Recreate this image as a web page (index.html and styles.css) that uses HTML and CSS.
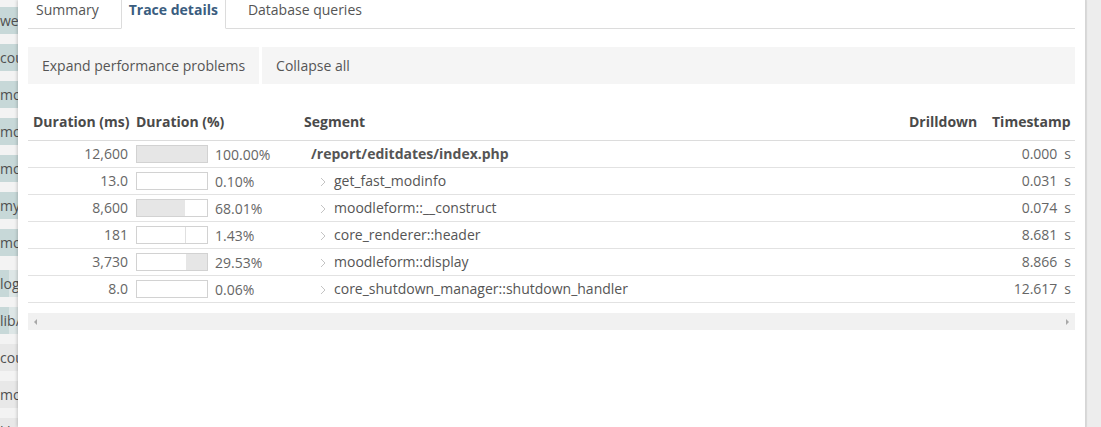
FILE: index.html
```html
<!DOCTYPE html>
<html>
<head>
<meta charset="utf-8">
<link rel="stylesheet" href="styles.css">
</head>
<body>
<div class="bgstrip">
  <div class="bgitem">web</div>
  <div class="bgitem">course</div>
  <div class="bgitem">mod</div>
  <div class="bgitem">mod</div>
  <div class="bgitem">mod</div>
  <div class="bgitem">my</div>
  <div class="bgitem">mod</div>
  <div class="bgitem part first">log</div>
  <div class="bgitem part">lib/</div>
  <div class="bgitem grey">course</div>
  <div class="bgitem grey">mod</div>
  <div class="bgitem grey">lib</div>
</div>
<div class="modal">
  <ul class="tabs">
    <li class="tab">Summary</li>
    <li class="tab active">Trace details</li>
    <li class="tab">Database queries</li>
  </ul>
  <div class="toolbar">
    <span class="btn sep">Expand performance problems</span>
    <span class="btn">Collapse all</span>
  </div>
  <table class="trace">
    <colgroup>
      <col class="c1"><col class="c2"><col class="c3"><col class="c4"><col class="c5">
    </colgroup>
    <thead>
      <tr><th>Duration (ms)</th><th>Duration (%)</th><th>Segment</th><th>Drilldown</th><th class="ts">Timestamp</th></tr>
    </thead>
    <tbody>
      <tr>
        <td class="num">12,600</td>
        <td><span class="bar"><span class="fill" style="left:0;width:100%"></span></span><span class="pct">100.00%</span></td>
        <td><span class="root">/report/editdates/index.php</span></td>
        <td></td>
        <td class="num">0.000<span class="unit">s</span></td>
      </tr>
      <tr>
        <td class="num">13.0</td>
        <td><span class="bar"><span class="fill" style="left:0;width:0.1%"></span></span><span class="pct">0.10%</span></td>
        <td><span class="child"><svg class="chev" width="6" height="10" viewBox="0 0 6 10"><polyline points="1,1 5,5 1,9" fill="none" stroke="#c4c4c4" stroke-width="1"/></svg>get_fast_modinfo</span></td>
        <td></td>
        <td class="num">0.031<span class="unit">s</span></td>
      </tr>
      <tr>
        <td class="num">8,600</td>
        <td><span class="bar"><span class="fill" style="left:0;width:68.01%"></span></span><span class="pct">68.01%</span></td>
        <td><span class="child"><svg class="chev" width="6" height="10" viewBox="0 0 6 10"><polyline points="1,1 5,5 1,9" fill="none" stroke="#c4c4c4" stroke-width="1"/></svg>moodleform::__construct</span></td>
        <td></td>
        <td class="num">0.074<span class="unit">s</span></td>
      </tr>
      <tr>
        <td class="num">181</td>
        <td><span class="bar"><span class="fill line" style="left:68.8%;width:1.43%"></span></span><span class="pct">1.43%</span></td>
        <td><span class="child"><svg class="chev" width="6" height="10" viewBox="0 0 6 10"><polyline points="1,1 5,5 1,9" fill="none" stroke="#c4c4c4" stroke-width="1"/></svg>core_renderer::header</span></td>
        <td></td>
        <td class="num">8.681<span class="unit">s</span></td>
      </tr>
      <tr>
        <td class="num">3,730</td>
        <td><span class="bar"><span class="fill" style="left:70.4%;width:29.6%"></span></span><span class="pct">29.53%</span></td>
        <td><span class="child"><svg class="chev" width="6" height="10" viewBox="0 0 6 10"><polyline points="1,1 5,5 1,9" fill="none" stroke="#c4c4c4" stroke-width="1"/></svg>moodleform::display</span></td>
        <td></td>
        <td class="num">8.866<span class="unit">s</span></td>
      </tr>
      <tr>
        <td class="num">8.0</td>
        <td><span class="bar"><span class="fill" style="left:99.9%;width:0.06%"></span></span><span class="pct">0.06%</span></td>
        <td><span class="child"><svg class="chev" width="6" height="10" viewBox="0 0 6 10"><polyline points="1,1 5,5 1,9" fill="none" stroke="#c4c4c4" stroke-width="1"/></svg>core_shutdown_manager::shutdown_handler</span></td>
        <td></td>
        <td class="num">12.617<span class="unit">s</span></td>
      </tr>
    </tbody>
  </table>
  <div class="hscroll">
    <svg width="6" height="8" viewBox="0 0 6 8"><polygon points="4,1 1,4 4,7" fill="#a8a8a8"/></svg>
    <svg width="6" height="8" viewBox="0 0 6 8"><polygon points="2,1 5,4 2,7" fill="#a8a8a8"/></svg>
  </div>
</div>
<div class="rightstrip"></div>
</body>
</html>
```

FILE: styles.css
```css
html, body {
  margin: 0;
  padding: 0;
}
body {
  width: 1101px;
  height: 427px;
  overflow: hidden;
  display: flex;
  font-family: "Open Sans", "Liberation Sans", sans-serif;
  font-size: 14px;
  color: #555;
  background: #f4f4f4;
}
.bgstrip {
  width: 18px;
  flex: none;
  overflow: hidden;
  padding-top: 7px;
  display: flex;
  flex-direction: column;
  gap: 10px;
  background: #f3f3f3;
}
.bgitem {
  flex: none;
  width: 60px;
  height: 27px;
  line-height: 27px;
  white-space: nowrap;
  background: #c7d8d8;
  color: #505050;
  font-size: 14px;
}
.bgitem.part {
  background: linear-gradient(to right, #c7d8d8 0 9px, #dde6e6 9px);
}
.bgitem.first {
  margin-top: 4px;
}
.bgitem.grey {
  background: #e8e8e8;
}
.modal {
  flex: none;
  width: 1047px;
  background: #fff;
  padding: 0 10px;
  box-shadow: -1px 0 3px rgba(0, 0, 0, 0.18);
  border-right: 1px solid #d6d6d6;
  position: relative;
  z-index: 1;
}
.rightstrip {
  flex: 1;
  background: #ededed;
  border-left: 1px solid #e0e0e0;
}
.tabs {
  list-style: none;
  margin: 0;
  padding: 0;
  display: flex;
  gap: 14px;
  border-bottom: 1px solid #dcdcdc;
  height: 28px;
}
.tab {
  padding: 0 7px 8px;
  line-height: 20px;
  border: 1px solid transparent;
  border-top: none;
  color: #555;
}
.tab.active {
  border-color: #dcdcdc;
  border-bottom: 1px solid #fff;
  background: #fff;
  font-weight: bold;
  color: #3a5d80;
  height: 20px;
}
.toolbar {
  margin-top: 18px;
  height: 37px;
  background: #f5f5f5;
  display: flex;
}
.btn {
  line-height: 37px;
  padding: 0 14px;
  color: #555;
}
.btn.sep {
  border-right: 3px solid #fff;
}
.trace {
  margin-top: 20px;
  width: 1047px;
  border-collapse: collapse;
  table-layout: fixed;
}
.c1 { width: 104px; }
.c2 { width: 168px; }
.c3 { width: 605px; }
.c4 { width: 83px; }
.c5 { width: 87px; }
.trace th {
  text-align: left;
  font-weight: bold;
  color: #4a4a4a;
  line-height: 20px;
  padding: 8px 4px;
  border-bottom: 1px solid #dcdcdc;
  white-space: nowrap;
}
.trace th:first-child {
  padding-left: 5px;
}
.trace th.ts {
  padding-left: 4px;
}
.trace td {
  line-height: 20px;
  padding: 3px 4px;
  border-bottom: 1px solid #e2e2e2;
  white-space: nowrap;
  color: #666;
}
.trace td.num {
  text-align: right;
}
.unit {
  margin-left: 7px;
}
.bar {
  display: inline-block;
  position: relative;
  width: 70px;
  height: 16px;
  border: 1px solid #d2d2d2;
  vertical-align: middle;
  margin-top: -2px;
  background: #fff;
}
.fill {
  position: absolute;
  top: 0;
  bottom: 0;
  background: #e6e6e6;
}
.fill.line {
  border-left: 1px solid #e0e0e0;
  background: transparent;
}
.pct {
  margin-left: 7px;
  position: relative;
  top: 1px;
}
.root {
  padding-left: 7px;
  font-weight: bold;
  color: #555;
}
.child {
  padding-left: 16px;
  color: #555;
}
.chev {
  margin-right: 8px;
  vertical-align: -1px;
}
.hscroll {
  margin-top: 10px;
  height: 17px;
  background: #f1f1f1;
  display: flex;
  align-items: center;
  justify-content: space-between;
  padding: 0 5px;
}
```
